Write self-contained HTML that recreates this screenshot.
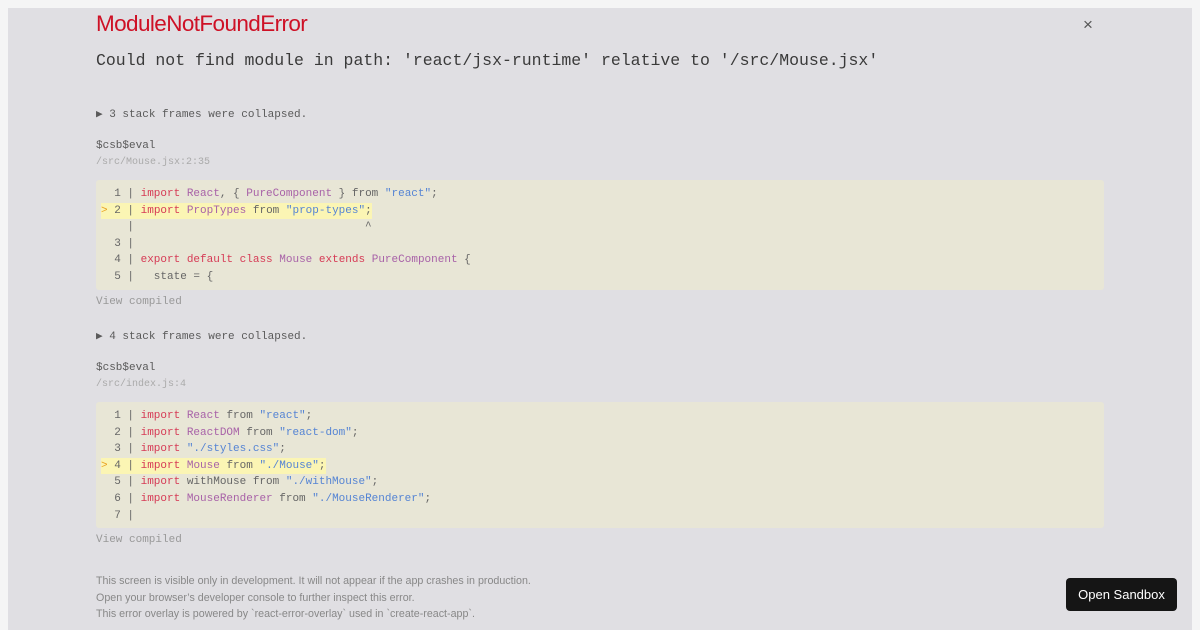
<!DOCTYPE html>
<html><head><style>
body{margin:0;width:1200px;height:630px;background:#f5f5f5;overflow:hidden;position:relative;font-family:"Liberation Sans",sans-serif}
.panel{position:absolute;left:8px;top:8px;width:1184px;height:622px;background:#e0dfe3}
.a{position:absolute;left:96px;white-space:pre}
.m{font-family:"Liberation Mono",monospace}
.title{top:11px;font-size:22.5px;color:#ce1126;letter-spacing:-0.6px}
.msg{top:51px;font-size:16.5px;color:#3a3a3a}
.st{font-size:11px;color:#5a5a5a}
.fn{font-size:10px;color:#aaa}
.vc{font-size:11px;color:#999}
.code{position:absolute;left:96px;width:1008px;background:#e8e6d6;border-radius:3px;font-family:"Liberation Mono",monospace;font-size:11px;color:#666;padding-top:6px;box-sizing:border-box}
.l{height:16.6px;line-height:16.6px;padding-left:5px;white-space:pre}
.hl{background:#fbf5b4;display:inline-block}
.k{color:#d63a55}.i{color:#a862a8}.s{color:#5584d4}.g{color:#e8a020}
.foot{left:96px;font-size:10.7px;color:#888;line-height:16.5px;top:573px}
.btn{position:absolute;left:1066px;top:578px;width:111px;height:33px;background:#151515;color:#fff;border-radius:4px;font-size:13px;text-align:center;line-height:33px}
.x{position:absolute;left:1083px;top:15px;font-size:17px;color:#555}
</style></head><body>
<div class="panel"></div>
<div class="a title">ModuleNotFoundError</div>
<div class="x">×</div>
<div class="a m msg">Could not find module in path: 'react/jsx-runtime' relative to '/src/Mouse.jsx'</div>
<div class="a m st" style="top:107px">▶ 3 stack frames were collapsed.</div>
<div class="a m st" style="top:140px">$csb$eval</div>
<div class="a m fn" style="top:157px">/src/Mouse.jsx:2:35</div>
<div class="code" style="top:180px;height:110px">
<div class="l">  1 | <span class="k">import</span> <span class="i">React</span>, { <span class="i">PureComponent</span> } from <span class="s">"react"</span>;</div>
<div class="l"><span class="hl"><span class="g">&gt;</span> 2 | <span class="k">import</span> <span class="i">PropTypes</span> from <span class="s">"prop-types"</span>;</span></div>
<div class="l">    |                                   ^</div>
<div class="l">  3 |</div>
<div class="l">  4 | <span class="k">export</span> <span class="k">default</span> <span class="k">class</span> <span class="i">Mouse</span> <span class="k">extends</span> <span class="i">PureComponent</span> {</div>
<div class="l">  5 |   state = {</div>
</div>
<div class="a m vc" style="top:296px">View compiled</div>
<div class="a m st" style="top:329px">▶ 4 stack frames were collapsed.</div>
<div class="a m st" style="top:362px">$csb$eval</div>
<div class="a m fn" style="top:379px">/src/index.js:4</div>
<div class="code" style="top:402px;height:126px">
<div class="l">  1 | <span class="k">import</span> <span class="i">React</span> from <span class="s">"react"</span>;</div>
<div class="l">  2 | <span class="k">import</span> <span class="i">ReactDOM</span> from <span class="s">"react-dom"</span>;</div>
<div class="l">  3 | <span class="k">import</span> <span class="s">"./styles.css"</span>;</div>
<div class="l"><span class="hl"><span class="g">&gt;</span> 4 | <span class="k">import</span> <span class="i">Mouse</span> from <span class="s">"./Mouse"</span>;</span></div>
<div class="l">  5 | <span class="k">import</span> withMouse from <span class="s">"./withMouse"</span>;</div>
<div class="l">  6 | <span class="k">import</span> <span class="i">MouseRenderer</span> from <span class="s">"./MouseRenderer"</span>;</div>
<div class="l">  7 |</div>
</div>
<div class="a m vc" style="top:534px">View compiled</div>
<div class="a foot">This screen is visible only in development. It will not appear if the app crashes in production.<br>Open your browser’s developer console to further inspect this error.<br>This error overlay is powered by `react-error-overlay` used in `create-react-app`.</div>
<div class="btn">Open Sandbox</div>
</body></html>
